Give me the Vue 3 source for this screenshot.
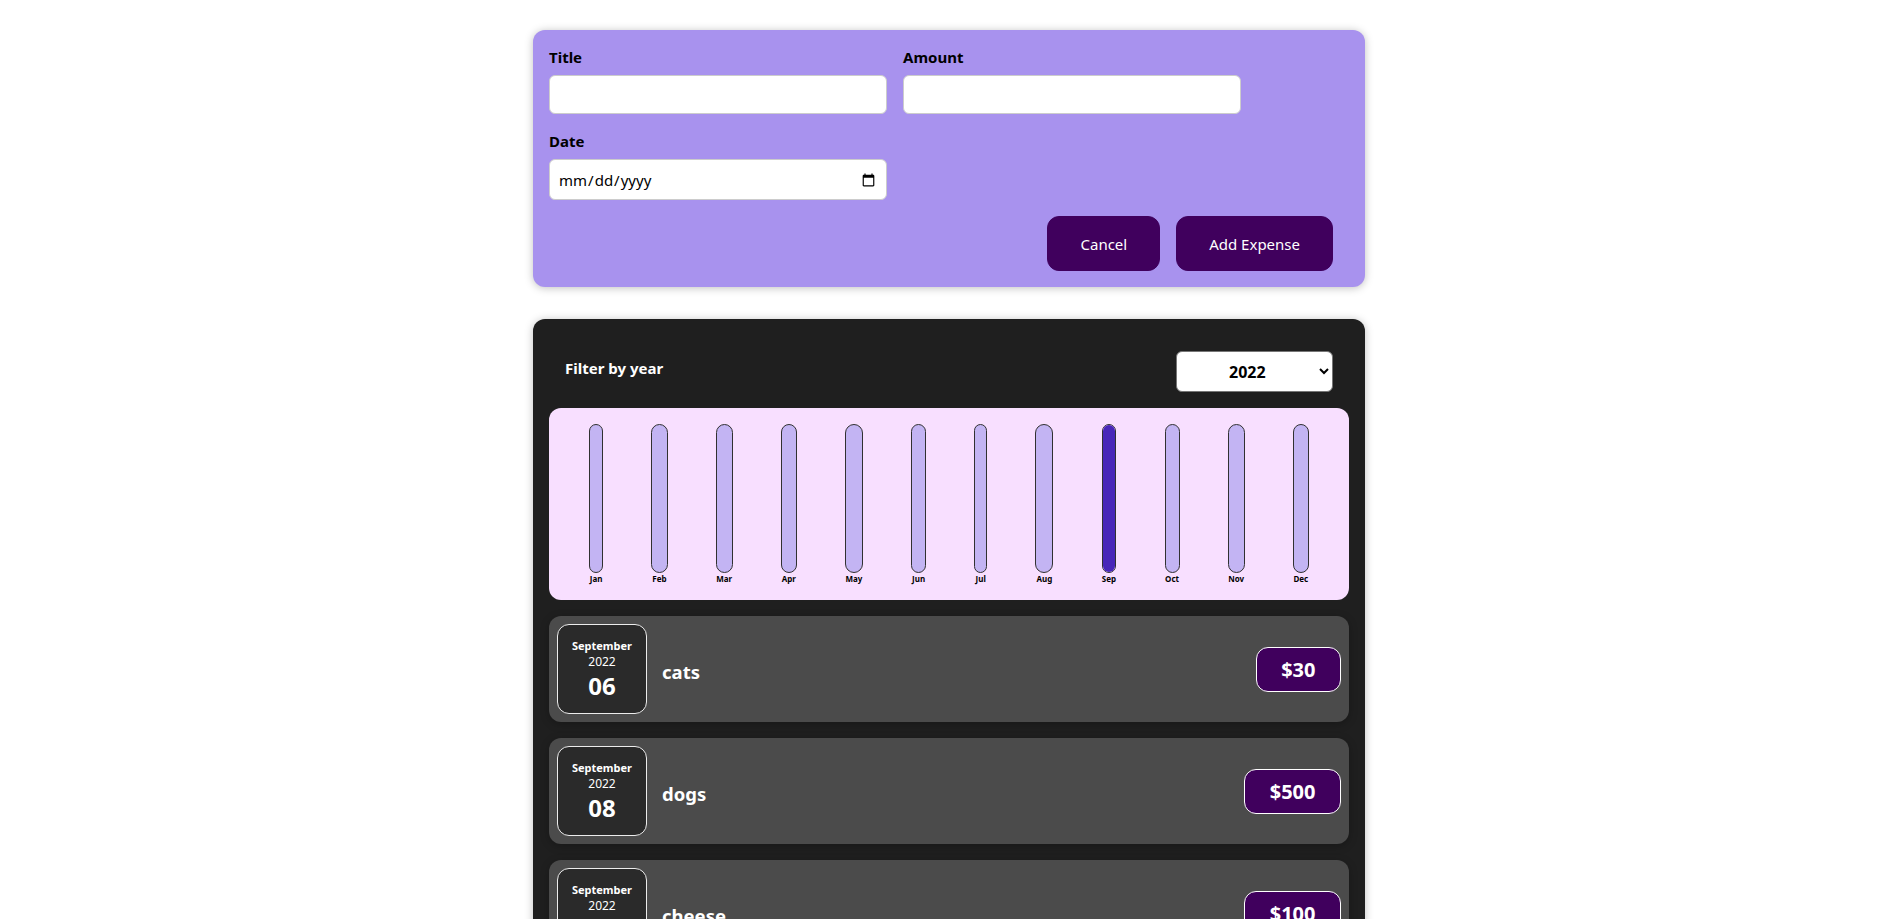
<template>
  <div class="page">
    <div class="new-expense">
      <form @submit.prevent>
        <div class="controls">
          <div class="control">
            <label>Title</label>
            <input type="text" />
          </div>
          <div class="control">
            <label>Amount</label>
            <input type="number" min="0.01" step="0.01" />
          </div>
          <div class="control">
            <label>Date</label>
            <input type="date" min="2019-01-01" max="2022-12-31" />
          </div>
        </div>
        <div class="actions">
          <button type="button">Cancel</button>
          <button type="submit">Add Expense</button>
        </div>
      </form>
    </div>

    <div class="expenses">
      <div class="filter">
        <label>Filter by year</label>
        <select v-model="year">
          <option v-for="y in years" :key="y" :value="y">{{ y }}</option>
        </select>
      </div>

      <div class="chart">
        <div v-for="bar in bars" :key="bar.label" class="chart-bar" :style="{ width: bar.width + 'px' }">
          <div class="bar-inner">
            <div class="bar-fill" :style="{ height: bar.fill + '%' }"></div>
          </div>
          <div class="bar-label">{{ bar.label }}</div>
        </div>
      </div>

      <ul class="list">
        <li v-for="item in items" :key="item.title" class="item">
          <div class="date">
            <div class="month">September</div>
            <div class="year">2022</div>
            <div class="day">{{ item.day }}</div>
          </div>
          <div class="description">
            <h2>{{ item.title }}</h2>
            <div class="price">${{ item.price }}</div>
          </div>
        </li>
      </ul>
    </div>
  </div>
</template>

<script setup>
import { ref } from 'vue'

const year = ref('2022')
const years = ['2022', '2021', '2020', '2019']

// label widths decide the bar widths in the chart
const months = [
  ['Jan', 14.1],
  ['Feb', 16.1],
  ['Mar', 16.9],
  ['Apr', 15.9],
  ['May', 17.9],
  ['Jun', 14.9],
  ['Jul', 12.9],
  ['Aug', 17.9],
  ['Sep', 14.9],
  ['Oct', 14.9],
  ['Nov', 16.9],
  ['Dec', 15.9]
]
const bars = months.map(([label, width]) => ({ label, width, fill: label === 'Sep' ? 100 : 0 }))

const items = [
  { title: 'cats', day: '06', price: 30 },
  { title: 'dogs', day: '08', price: 500 },
  { title: 'cheese', day: '12', price: 100 }
]
</script>

<style>
html,
body {
  margin: 0;
  background: #fff;
  font-family: "Noto Sans", sans-serif;
}

html {
  scrollbar-width: none;
}
</style>

<style scoped>
.page {
  padding-left: 4px;
}

.new-expense,
.expenses {
  width: 800px;
  margin: 30px auto 32px;
  padding: 16px;
  border-radius: 12px;
  box-shadow: 0 1px 8px rgba(0, 0, 0, 0.25);
}

.new-expense {
  background: #a892ee;
}

.controls {
  display: flex;
  flex-wrap: wrap;
  gap: 16px;
  margin-bottom: 16px;
}

.control label {
  display: block;
  margin-bottom: 6px;
  font-size: 15px;
  font-weight: 700;
  line-height: 23px;
  color: #000;
}

.control input {
  display: block;
  width: 320px;
  padding: 8px;
  border: 1px solid #ccc;
  border-radius: 6px;
  font: inherit;
  line-height: 21px;
  background: #fff;
  box-sizing: content-box;
}

.control input[type='date'] {
  height: 23px;
  padding: 9px 8px 7px;
  font-size: 15px;
}

.actions {
  padding-right: 16px;
  text-align: right;
}

.actions button {
  margin-left: 16px;
  padding: 17px 32px 15px;
  border: 1px solid #40005d;
  border-radius: 12px;
  background: #40005d;
  color: #fff;
  font: inherit;
  font-size: 15px;
  line-height: 21px;
  cursor: pointer;
}

.expenses {
  background: #1f1f1f;
}

.filter {
  display: flex;
  align-items: center;
  justify-content: space-between;
  margin: 16px 0;
  padding: 0 16px;
  color: #fff;
}

.filter label {
  margin-bottom: 6px;
  font-size: 15px;
  font-weight: 700;
  line-height: 23px;
}

.filter select {
  box-sizing: border-box;
  width: 157px;
  height: 41px;
  padding: 0 48px;
  border-radius: 6px;
  font: inherit;
  font-size: 16px;
  font-weight: 700;
  background: #fff;
  color: #000;
}

.chart {
  display: flex;
  justify-content: space-around;
  height: 160px;
  padding: 16px;
  border-radius: 12px;
  background: #f8dfff;
}

.chart-bar {
  display: flex;
  flex-direction: column;
  align-items: center;
  height: 100%;
}

.bar-inner {
  display: flex;
  flex-direction: column;
  justify-content: flex-end;
  flex: 1;
  width: 100%;
  box-sizing: border-box;
  border: 1px solid #313131;
  border-radius: 12px;
  background: #c3b4f3;
  overflow: hidden;
}

.bar-fill {
  width: 100%;
  background: #4826b9;
}

.bar-label {
  font-size: 8px;
  font-weight: 700;
  line-height: 11px;
  text-align: center;
  white-space: nowrap;
}

.list {
  margin: 0;
  padding: 0;
  list-style: none;
}

.item {
  display: flex;
  align-items: center;
  margin: 16px 0;
  padding: 8px;
  border-radius: 12px;
  background: #4b4b4b;
  box-shadow: 0 2px 8px rgba(0, 0, 0, 0.25);
}

.date {
  display: flex;
  flex-direction: column;
  align-items: center;
  justify-content: center;
  width: 88px;
  height: 88px;
  border: 1px solid #ececec;
  border-radius: 12px;
  background: #2a2a2a;
  color: #fff;
}

.month {
  margin-top: 1px;
  font-size: 11px;
  font-weight: 700;
  line-height: 16px;
}

.year {
  font-size: 12px;
  line-height: 16px;
}

.day {
  font-size: 24px;
  font-weight: 700;
  line-height: 32px;
}

.description {
  display: flex;
  flex: 1;
  align-items: center;
  justify-content: space-between;
  gap: 16px;
}

.description h2 {
  margin: 0 15px;
  padding-top: 4px;
  font-size: 18.5px;
  line-height: 27px;
  color: #fff;
}

.price {
  margin-top: 1px;
  padding: 8px 24.5px;
  border: 1px solid #fff;
  border-radius: 12px;
  background: #40005d;
  color: #fff;
  font-size: 20px;
  font-weight: 700;
  line-height: 27px;
}
</style>
